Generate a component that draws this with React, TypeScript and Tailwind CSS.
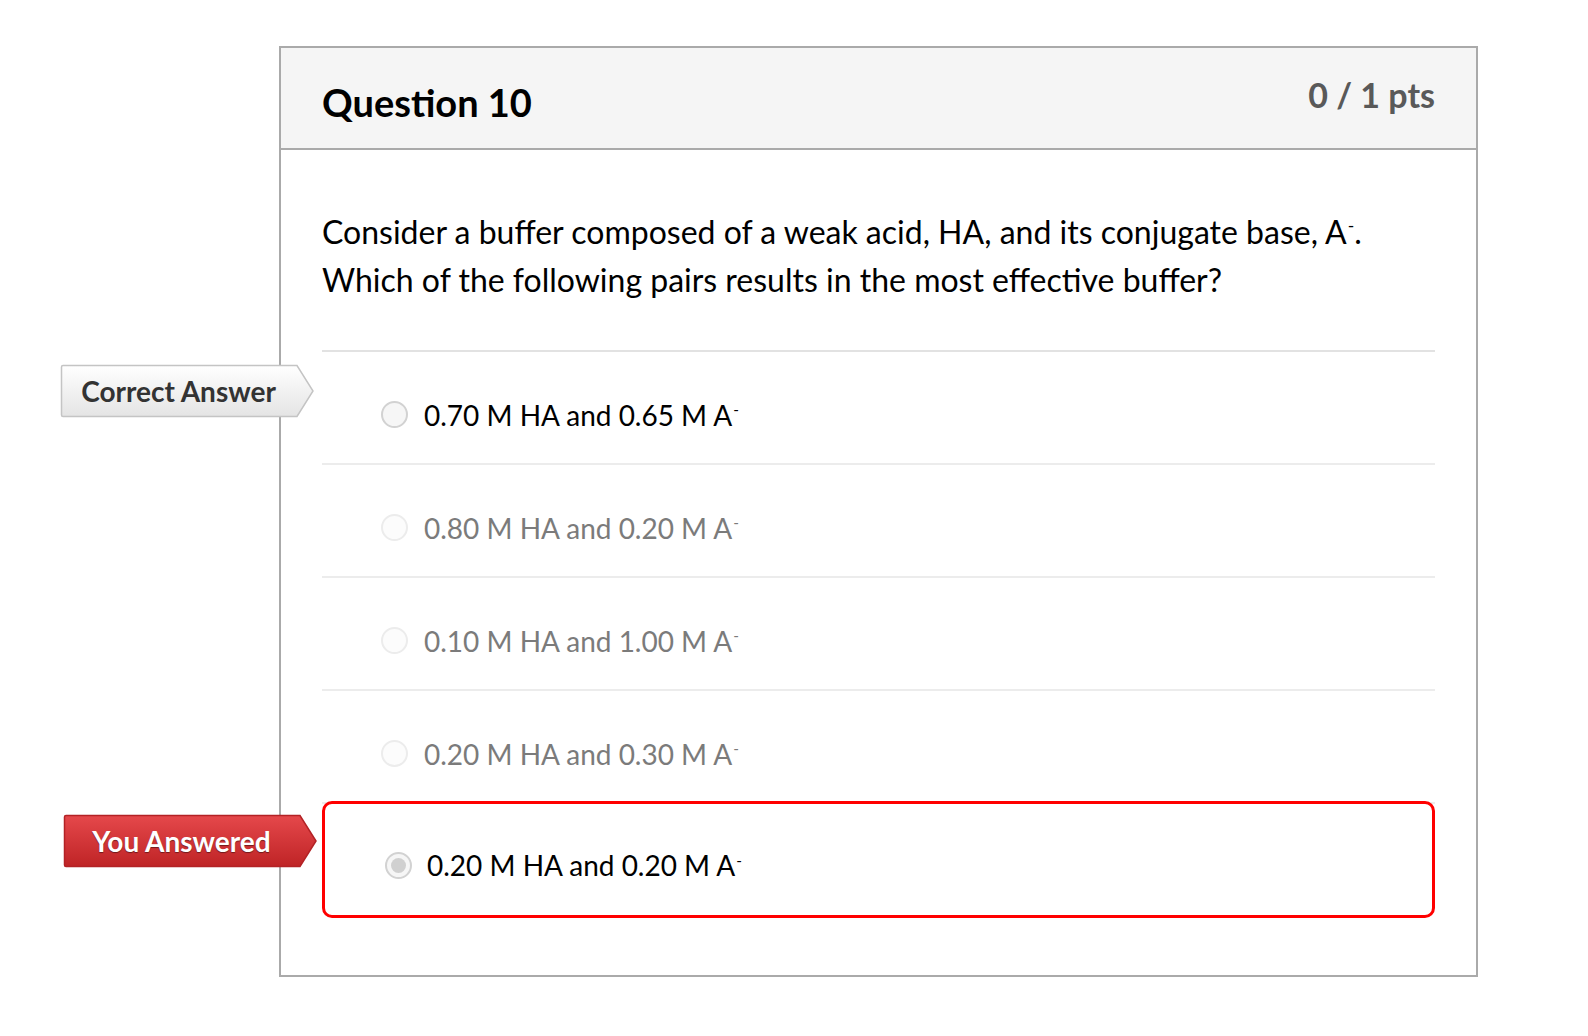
import React from "react"

type Answer = {
  left: string
  right: string
  correct?: boolean
  chosen?: boolean
}

const answers: Answer[] = [
  { left: "0.70", right: "0.65", correct: true },
  { left: "0.80", right: "0.20" },
  { left: "0.10", right: "1.00" },
  { left: "0.20", right: "0.30" },
  { left: "0.20", right: "0.20", chosen: true },
]

function Minus() {
  return <span className="relative -top-[0.66em] ml-[1px] align-baseline text-[0.55em] leading-none">-</span>
}

// arrow-shaped flag next to an answer
function Flag({ kind }: { kind: "correct" | "wrong" }) {
  const red = kind === "wrong"
  return (
    <div className={`absolute right-[calc(100%+7px)] h-[54px] w-[255px] ${red ? "top-[10px]" : "top-[12px]"}`}>
      <svg className="absolute inset-0" width="255" height="54" viewBox="0 0 255 54">
        <defs>
          <linearGradient id={`g-${kind}`} x1="0" y1="0" x2="0" y2="1">
            <stop offset="0" stopColor={red ? "#e5484b" : "#ffffff"} />
            <stop offset="1" stopColor={red ? "#bf2426" : "#e4e4e4"} />
          </linearGradient>
        </defs>
        <path
          d="M3 1.5 H237 L253 27 L237 52.5 H3 Q1.5 52.5 1.5 51 V3 Q1.5 1.5 3 1.5 Z"
          fill={`url(#g-${kind})`}
          stroke={red ? "#b32225" : "#c4c4c4"}
          strokeWidth="1.5"
        />
      </svg>
      <div
        className={`relative flex h-full w-[237px] items-center justify-center text-[28px] font-bold ${
          red ? "text-white [text-shadow:0_1px_1px_rgba(0,0,0,0.45)]" : "text-[#333]"
        }`}
      >
        {red ? "You Answered" : "Correct Answer"}
      </div>
    </div>
  )
}

function Radio({ chosen, faded }: { chosen?: boolean; faded?: boolean }) {
  return (
    <span
      className={`flex h-[27px] w-[27px] shrink-0 items-center justify-center rounded-full border-2 ${
        faded ? "border-[#ececec] bg-[#fcfcfc]" : "border-[#d2d2d2] bg-[#f6f6f6]"
      }`}
    >
      {chosen && <span className="h-[15px] w-[15px] rounded-full bg-[#d0d0d0]" />}
    </span>
  )
}

export default function App() {
  return (
    <div className="min-h-screen bg-white pl-[279px] pt-[46px] font-['Lato','Noto_Sans',sans-serif] text-black">
      <div className="w-[1199px] border-2 border-[#aaaaaa] bg-white">
        <div className="flex h-[102px] items-start justify-between border-b-2 border-[#aaaaaa] bg-[#f5f5f5] pl-[41px] pr-[41px]">
          <h2 className="pt-[34px] text-[38px] font-bold leading-[1.1]">Question 10</h2>
          <div className="pt-[21px] text-[34px] font-bold text-[#595959]">0 / 1 pts</div>
        </div>

        <div className="px-[41px] pb-[57px] pt-[58px]">
          <p className="text-[32px] leading-[48px]">
            Consider a buffer composed of a weak acid, HA, and its conjugate base, A<Minus />.
            <br />
            Which of the following pairs results in the most effective buffer?
          </p>

          <div className="mt-[46px] border-t-2 border-[#e2e2e2]">
            {answers.map((a, i) =>
              a.chosen ? (
                <div
                  key={i}
                  className="relative -mt-[3px] flex h-[117px] items-center rounded-[10px] border-[3px] border-[#ff0000] pl-[60px] pt-[11px]"
                >
                  <Flag kind="wrong" />
                  <Radio chosen />
                  <span className="ml-[15px] text-[28px]">
                    {a.left} M HA and {a.right} M A<Minus />
                  </span>
                </div>
              ) : (
                <div
                  key={i}
                  className="relative flex h-[113px] items-center border-b-2 border-[#ececec] pl-[59px] pt-[14px]"
                >
                  {a.correct && <Flag kind="correct" />}
                  <Radio faded={!a.correct} />
                  <span className={`ml-[16px] text-[28px] ${a.correct ? "text-black" : "text-[#7b7b7b]"}`}>
                    {a.left} M HA and {a.right} M A<Minus />
                  </span>
                </div>
              ),
            )}
          </div>
        </div>
      </div>
    </div>
  )
}
